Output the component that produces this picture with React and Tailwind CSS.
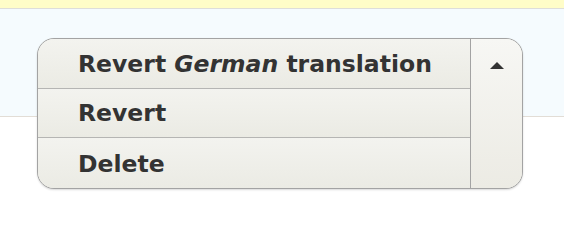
import React from 'react';

const rows = [
  { key: 'german', label: <>Revert <em className="italic">German</em> translation</> },
  { key: 'revert', label: 'Revert' },
  { key: 'delete', label: 'Delete' },
];

const App = () => {
  return (
    <div className="relative h-[238px] w-[564px] overflow-hidden bg-white font-['DejaVu_Sans',sans-serif]">
      {/* Messages bar */}
      <div className="h-[9px] bg-[#fffdc8] border-b border-[#dededa]" />
      {/* Content band */}
      <div className="h-[108px] bg-[#f5fbfe] border-b border-[#e2ddd6]" />

      {/* Open dropbutton */}
      <div className="absolute left-[37px] top-[38px] flex h-[151px] w-[486px] overflow-hidden rounded-[17px] border border-[#a3a3a3] bg-[#f0f0eb] shadow-[0_1px_2px_rgba(0,0,0,0.15)]">
        <ul className="flex flex-1 flex-col">
          {rows.map((row, i) => (
            <li
              key={row.key}
              className={`flex h-[50px] items-center bg-gradient-to-b from-[#f3f3ef] to-[#ebebe4] pl-[40px] pt-[2px] text-[23.5px] font-bold text-[#333] ${
                i < rows.length - 1 ? 'border-b border-[#b5b5b3]' : ''
              }`}
            >
              <span className="whitespace-nowrap">{row.label}</span>
            </li>
          ))}
        </ul>
        <div className="flex w-[52px] justify-center border-l border-[#a3a3a3] bg-gradient-to-b from-[#f7f7f4] to-[#ecebe4] pt-[23px]">
          <svg width="14" height="7" viewBox="0 0 14 7">
            <path d="M7 0 L14 7 L0 7 Z" fill="#333" />
          </svg>
        </div>
      </div>
    </div>
  );
};

export default App;
